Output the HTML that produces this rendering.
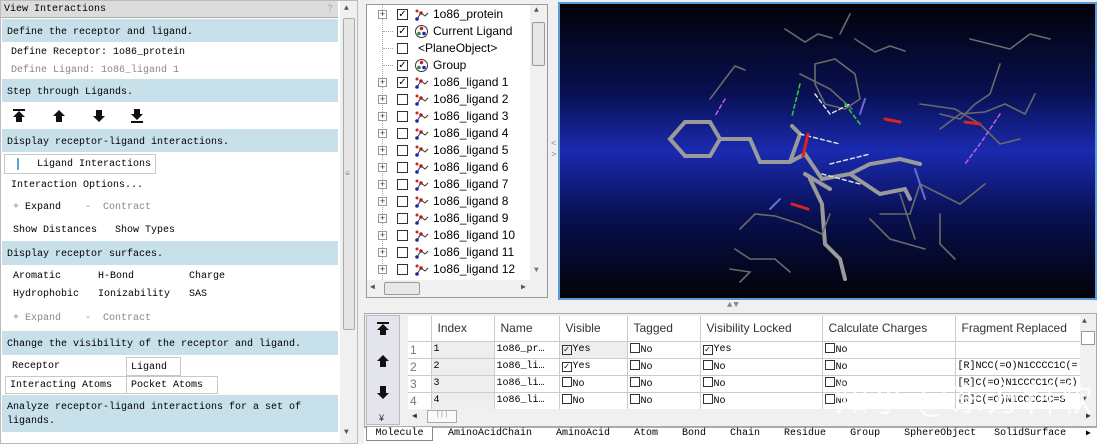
<!DOCTYPE html>
<html><head><meta charset="utf-8"><style>
*{margin:0;padding:0;box-sizing:border-box}
body{width:1097px;height:444px;overflow:hidden;background:#f0f0f0;position:relative;font-family:"Liberation Mono","WenQuanYi Zen Hei",monospace;font-size:10px;color:#000}
.a{position:absolute}
.hd{position:absolute;left:2px;width:336px;background:#c8e0ea;padding-left:5px;padding-top:2px}
.wt{position:absolute;left:2px;width:336px;background:#fff}
.t{position:absolute;white-space:nowrap}
.g{color:#888}
.btn{position:absolute;border:1px solid #c8c8c8;background:#fff;padding-left:4px;line-height:17px}
.tree{font-family:"Liberation Sans",sans-serif;font-size:12px}
.row{position:absolute;left:0;height:17px;line-height:17px;white-space:nowrap}
.cb{position:absolute;width:11px;height:11px;border:1px solid #333;background:#fff;font-size:10px;line-height:9px;text-align:center}
.pl{position:absolute;width:9px;height:9px;border:1px solid #999;background:#fff;font-size:9px;line-height:7px;text-align:center;color:#333}
.gr td{border-right:1px solid #ccc;border-bottom:1px solid #ccc;height:17px;padding-left:2px;white-space:nowrap;overflow:hidden;font-family:"Liberation Mono",monospace;font-size:10px}
.gr th{border-right:1px solid #ccc;border-bottom:1px solid #ccc;height:25px;text-align:left;padding-left:6px;font-family:"Liberation Sans",sans-serif;font-size:12px;font-weight:normal;color:#333;background:#fff}
.sc{display:inline-block;width:10px;height:10px;border:1px solid #333;vertical-align:-1px;margin-right:1px;font-size:9px;line-height:8px;text-align:center}
</style></head><body>
<!-- left panel -->
<div class="a" style="left:0;top:0;width:358px;height:444px;background:#fff;border:1px solid #bbb"></div>
<div class="a" style="left:1px;top:1px;width:337px;height:17px;background:#dcdcdc;border-bottom:1px solid #aaa;padding-left:3px;line-height:18px">View Interactions<span style="position:absolute;right:5px;color:#aaa">?</span></div>
<div class="a" style="left:340px;top:1px;width:17px;height:442px;background:#f0f0f0"></div>
<div class="a" style="left:343px;top:18px;width:12px;height:312px;background:#e6e6e6;border:1px solid #aaa;border-radius:2px"></div>
<div class="a" style="left:344px;top:4px;font-size:8px;color:#555">▲</div>
<div class="a" style="left:344px;top:428px;font-size:8px;color:#555">▼</div>
<div class="a" style="left:345px;top:170px;color:#888;font-size:8px">≡</div>

<div class="hd" style="top:19px;height:23px;line-height:23px">Define the receptor and ligand.</div>
<div class="wt" style="top:42px;height:37px"><span class="t" style="left:9px;top:5px">Define Receptor: 1o86_protein</span><span class="t g" style="left:9px;top:23px">Define Ligand: 1o86_ligand 1</span></div>
<div class="hd" style="top:79px;height:23px;line-height:23px">Step through Ligands.</div>
<div class="wt" style="top:102px;height:27px">
<svg class="a" style="left:10px;top:7px" width="135" height="14" viewBox="0 0 135 14"><g fill="#111"><rect x="1" y="0" width="12" height="2"/><path d="M7 2L1 8H4V13H10V8H13Z"/><path d="M47 1L41 7H44V13H50V7H53Z"/><path d="M87 13L81 7H84V1H90V7H93Z"/><path d="M125 11L119 5H122V0H128V5H131Z"/><rect x="119" y="12" width="12" height="2"/></g></svg></div>
<div class="hd" style="top:129px;height:23px;line-height:23px">Display receptor-ligand interactions.</div>
<div class="wt" style="top:152px;height:89px">
<div class="btn" style="left:2px;top:2px;width:152px;height:20px;padding-left:32px;line-height:20px">Ligand Interactions</div>
<div class="a" style="left:15px;top:6px;width:2px;height:12px;background:#5aa7d0"></div>
<span class="t" style="left:9px;top:28px">Interaction Options...</span>
<span class="t" style="left:11px;top:50px"><span class="g">+</span> Expand&nbsp;&nbsp;&nbsp; <span class="g">-&nbsp; Contract</span></span>
<span class="t" style="left:11px;top:73px">Show Distances&nbsp;&nbsp; Show Types</span></div>
<div class="hd" style="top:241px;height:24px;line-height:24px">Display receptor surfaces.</div>
<div class="wt" style="top:265px;height:66px">
<span class="t" style="left:11px;top:6px">Aromatic</span><span class="t" style="left:96px;top:6px">H-Bond</span><span class="t" style="left:187px;top:6px">Charge</span>
<span class="t" style="left:11px;top:24px">Hydrophobic</span><span class="t" style="left:96px;top:24px">Ionizability</span><span class="t" style="left:187px;top:24px">SAS</span>
<span class="t g" style="left:11px;top:48px">+ Expand&nbsp;&nbsp;&nbsp; -&nbsp; Contract</span></div>
<div class="hd" style="top:331px;height:24px;line-height:24px">Change the visibility of the receptor and ligand.</div>
<div class="wt" style="top:355px;height:40px">
<span class="t" style="left:10px;top:6px">Receptor</span>
<div class="btn" style="left:124px;top:2px;width:55px;height:19px;line-height:19px">Ligand</div>
<div class="btn" style="left:3px;top:21px;width:122px;height:18px;line-height:17px">Interacting Atoms</div>
<div class="btn" style="left:124px;top:21px;width:92px;height:18px;line-height:17px">Pocket Atoms</div></div>
<div class="hd" style="top:395px;height:37px;line-height:14px;padding-top:6px">Analyze receptor-ligand interactions for a set of ligands.</div>

<!-- tree -->
<div class="a" style="left:366px;top:4px;width:182px;height:294px;background:#fff;border:1px solid #999"></div>
<div class="a tree" style="left:367px;top:5px;width:163px;height:275px;overflow:hidden">
<div class="a" style="left:15px;top:0;width:0;height:275px;border-left:1px dotted #aaa"></div>
<div id="tr"></div>
</div>
<div class="a" style="left:530px;top:5px;width:17px;height:275px;background:#f0f0f0"></div>
<div class="a" style="left:532px;top:22px;width:13px;height:44px;background:#e8e8e8;border:1px solid #999;border-radius:2px"></div>
<div class="a" style="left:534px;top:6px;font-size:8px;color:#555">▲</div>
<div class="a" style="left:534px;top:266px;font-size:8px;color:#777">▼</div>
<div class="a" style="left:367px;top:280px;width:180px;height:17px;background:#f0f0f0"></div>
<div class="a" style="left:384px;top:282px;width:36px;height:13px;background:#e8e8e8;border:1px solid #999;border-radius:2px"></div>
<div class="a" style="left:370px;top:282px;font-size:8px;color:#555">◀</div>
<div class="a" style="left:521px;top:282px;font-size:8px;color:#555">▶</div>
<div class="a" style="left:551px;top:139px;font-size:9px;color:#888;line-height:11px">&lt;<br>&gt;</div>

<!-- 3D view -->
<div class="a" style="left:558px;top:2px;width:539px;height:298px;border:2px solid #5a9ad8;background:linear-gradient(#020208 0%,#081050 30%,#1a2ab0 50%,#081050 72%,#020206 100%)">
<svg width="535" height="294" viewBox="0 0 535 294" fill="none" stroke-linecap="round">
<g stroke="#9a9a9a" stroke-width="4"><path d="M110 135L125 118L150 118L160 135L150 152L125 152Z"/><path d="M160 135L190 135L200 158L230 158L245 150L262 175L290 170L310 160L340 155L360 160"/><path d="M230 158L240 130L232 122"/><path d="M250 175L262 200L265 240L280 255L285 275"/><path d="M290 170L320 190L345 185L350 195"/><path d="M245 170L270 185"/></g>
<g stroke="#6a6a6a" stroke-width="1.6"><path d="M150 95L165 75L175 62L185 66"/><path d="M225 25L245 38L258 30L272 34"/><path d="M295 35L315 48L330 42L345 47"/><path d="M255 60L275 55L295 70L300 95L285 105L265 100L255 80Z"/><path d="M240 70L270 85L292 105"/><path d="M410 35L450 45L470 30L490 35"/><path d="M440 60L430 90L415 100L400 115L380 110"/><path d="M380 125L400 110L425 108L445 100L465 110L475 90"/><path d="M360 100L395 105L420 120L440 140L460 135"/><path d="M180 225L195 210L215 212L240 220L262 230L270 210"/><path d="M175 245L190 255L215 255L230 268"/><path d="M320 210L350 210L360 180L380 190L400 200L425 180"/><path d="M340 190L355 235"/><path d="M310 215L330 235L365 245"/><path d="M170 265L190 268L180 278"/><path d="M380 210L380 240L395 255"/><path d="M280 30L290 10"/></g>
<g stroke="#ddd" stroke-width="1.5" stroke-dasharray="4 3"><path d="M240 130L280 140"/><path d="M262 170L300 180"/><path d="M270 160L310 150"/><path d="M255 90L270 110L290 100"/></g>
<g stroke="#3c3" stroke-width="1.5" stroke-dasharray="4 3"><path d="M240 80L232 112"/><path d="M285 100L300 120"/></g>
<g stroke="#c060e0" stroke-width="1.5" stroke-dasharray="4 3"><path d="M440 110L420 140L405 160"/><path d="M165 95L155 112"/></g>
<g stroke="#d22" stroke-width="3"><path d="M248 130L243 152"/><path d="M325 115L340 118"/><path d="M405 118L420 120"/><path d="M232 200L248 205"/></g>
<g stroke="#6a6ad0" stroke-width="2"><path d="M355 165L365 195"/><path d="M210 205L220 195"/><path d="M300 110L305 95"/></g>
</svg></div>

<!-- splitter -->
<div class="a" style="left:727px;top:300px;font-size:9px;color:#888;letter-spacing:1px">▲▼</div>

<!-- grid -->
<div class="a" style="left:364px;top:313px;width:733px;height:114px;background:#f0f0f0;border:1px solid #aaa"></div>
<div class="a" style="left:366px;top:315px;width:34px;height:110px;background:#e4e4ec;border:1px solid #bbb"></div>
<svg class="a" style="left:376px;top:322px" width="14" height="100" viewBox="0 0 14 100"><g fill="#111"><rect x="1" y="0" width="12" height="2"/><path d="M7 2L1 8H4V13H10V8H13Z"/><path d="M7 33L1 39H4V45H10V39H13Z"/><path d="M7 77L1 71H4V64H10V71H13Z"/></g><text x="3" y="99" font-size="9" fill="#333" font-family="Liberation Sans">¥</text></svg>
<div class="a" style="left:408px;top:316px;width:672px;height:93px;background:#fff;overflow:hidden">
<table class="gr" style="border-collapse:collapse;table-layout:fixed;width:690px">
<colgroup><col style="width:23px"><col style="width:63px"><col style="width:65px"><col style="width:68px"><col style="width:73px"><col style="width:122px"><col style="width:133px"><col style="width:143px"></colgroup>
<tr><th></th><th>Index</th><th>Name</th><th>Visible</th><th>Tagged</th><th>Visibility Locked</th><th>Calculate Charges</th><th>Fragment Replaced</th></tr>
<tr><td style="color:#777;font-family:Liberation Sans;font-size:12px">1</td><td style="background:#eee">1</td><td>1o86_pr…</td><td style="background:#eee"><span class="sc">✓</span>Yes</td><td><span class="sc"></span>No</td><td><span class="sc">✓</span>Yes</td><td><span class="sc"></span>No</td><td></td></tr>
<tr><td style="color:#777;font-family:Liberation Sans;font-size:12px">2</td><td style="background:#eee">2</td><td>1o86_li…</td><td><span class="sc">✓</span>Yes</td><td><span class="sc"></span>No</td><td><span class="sc"></span>No</td><td><span class="sc"></span>No</td><td>[R]NCC(=O)N1CCCC1C(=</td></tr>
<tr><td style="color:#777;font-family:Liberation Sans;font-size:12px">3</td><td style="background:#eee">3</td><td>1o86_li…</td><td><span class="sc"></span>No</td><td><span class="sc"></span>No</td><td><span class="sc"></span>No</td><td><span class="sc"></span>No</td><td>[R]C(=O)N1CCCC1C(=C)</td></tr>
<tr><td style="color:#777;font-family:Liberation Sans;font-size:12px">4</td><td style="background:#eee">4</td><td>1o86_li…</td><td><span class="sc"></span>No</td><td><span class="sc"></span>No</td><td><span class="sc"></span>No</td><td><span class="sc"></span>No</td><td>[R]C(=O)N1CCCC1C=S</td></tr>
</table></div>
<div class="a" style="left:1080px;top:316px;width:16px;height:93px;background:#f0f0f0"></div>
<div class="a" style="left:1081px;top:331px;width:14px;height:14px;border:1px solid #999;background:#fff"></div>
<div class="a" style="left:1082px;top:317px;font-size:8px;color:#555">▲</div>
<div class="a" style="left:1082px;top:395px;font-size:8px;color:#555">▼</div>
<div class="a" style="left:408px;top:409px;width:688px;height:16px;background:#f0f0f0"></div>
<div class="a" style="left:427px;top:410px;width:30px;height:13px;border:1px solid #aaa;background:#fafafa;font-size:7px;color:#888;text-align:center">|||</div>
<div class="a" style="left:412px;top:411px;font-size:8px;color:#333">◀</div>
<div class="a" style="left:1086px;top:411px;font-size:8px;color:#333">▶</div>
<div class="a" style="left:835px;top:372px;font-family:'Noto Sans CJK SC',sans-serif;font-size:34px;color:rgba(255,255,255,.8);white-space:nowrap;letter-spacing:2px">知乎 @东方科软</div>

<!-- tabs -->
<div class="a" style="left:364px;top:427px;width:733px;height:17px;background:#fff;border-top:1px solid #aaa"></div>
<div class="a" style="left:366px;top:427px;width:67px;height:14px;border:1px solid #888;border-top:none;background:#fff;text-align:center;line-height:13px">Molecule</div>
<div class="a" style="left:448px;top:427px;line-height:13px;white-space:nowrap;word-spacing:0">AminoAcidChain&nbsp;&nbsp;&nbsp; AminoAcid&nbsp;&nbsp;&nbsp; Atom&nbsp;&nbsp;&nbsp; Bond&nbsp;&nbsp;&nbsp; Chain&nbsp;&nbsp;&nbsp; Residue&nbsp;&nbsp;&nbsp; Group&nbsp;&nbsp;&nbsp; SphereObject&nbsp;&nbsp; SolidSurface</div>
<div class="a" style="left:1086px;top:428px;font-size:8px">▶</div>

<script>
var names=["1o86_protein","Current Ligand","&lt;PlaneObject&gt;","Group"];for(var i=1;i<=12;i++)names.push("1o86_ligand "+i);
var h="";for(var i=0;i<16;i++){var y=1+i*17;var plus=!(i>=1&&i<=3);var chk=i<=1||i==3||i==4;
h+='<div class="row" style="top:'+y+'px;width:163px">';
if(plus)h+='<div class="pl" style="left:11px;top:4px">+</div>';else h+='<div class="a" style="left:16px;top:8px;width:10px;border-top:1px dotted #aaa"></div>';
h+='<div class="cb" style="left:30px;top:3px">'+(chk?'✓':'')+'</div>';
if(i==2){h+='<span class="a" style="left:51px">'+names[i]+'</span>';}
else{ if(i==1||i==3)h+='<svg class="a" style="left:47px;top:1px" width="15" height="15"><circle cx="7.5" cy="7.5" r="6" fill="#fff" stroke="#333"/><circle cx="7.5" cy="4.5" r="1.8" fill="#c22"/><circle cx="5" cy="9.5" r="1.8" fill="#2a8a4a"/><circle cx="10" cy="9.5" r="1.8" fill="#22a"/></svg>';
else h+='<svg class="a" style="left:47px;top:2px" width="16" height="14"><path d="M3 11L7 5L11 8L14 5" stroke="#333" fill="none"/><circle cx="3" cy="11" r="1.8" fill="#22a"/><circle cx="7" cy="5" r="1.8" fill="#a22"/><circle cx="3" cy="3" r="1.5" fill="#c22"/></svg>';
h+='<span class="a" style="left:66px">'+names[i]+'</span>';}
h+='</div>';}
document.getElementById("tr").innerHTML=h;
</script>
</body></html>
